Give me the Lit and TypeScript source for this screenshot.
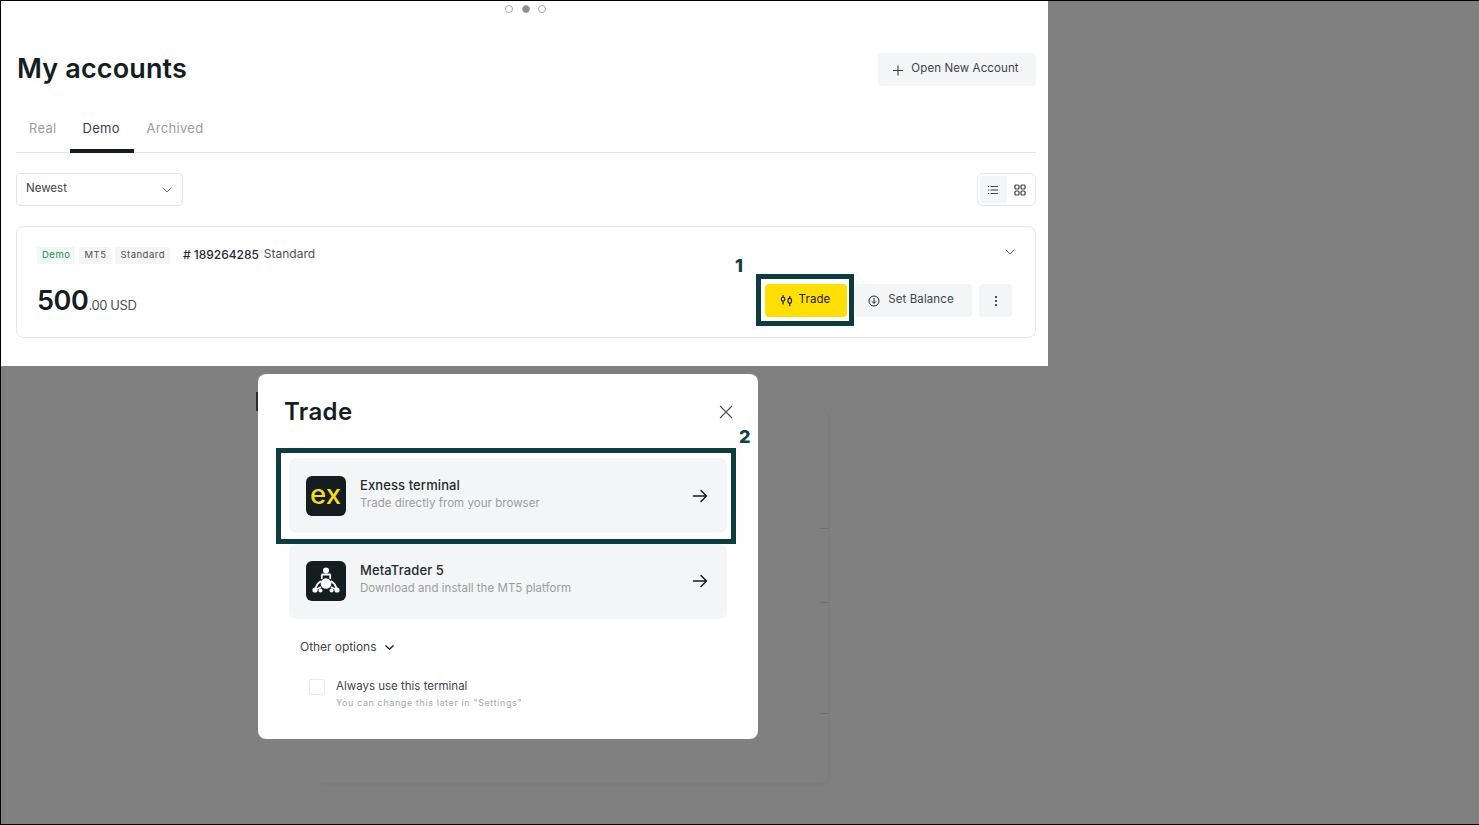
import { LitElement, html, css } from "lit";
import { customElement } from "lit/decorators.js";

const chevron = (size: number, sw = 1, color = "#5f6469") => html`<svg width=${size} height=${size} viewBox="0 0 12 12" fill="none"><path d="M2 4l4 4 4-4" stroke=${color} stroke-width=${sw} stroke-linecap="round" stroke-linejoin="round"/></svg>`;
const arrow = html`<svg width="16" height="16" viewBox="0 0 16 16" fill="none"><path d="M1.5 8h13M9 2.5L14.5 8 9 13.5" stroke="#141d22" stroke-width="1.5" stroke-linecap="round" stroke-linejoin="round"/></svg>`;

@customElement("app-root")
export class AppRoot extends LitElement {
  static styles = css`
    :host { display: block; position: relative; width: 1479px; height: 825px; box-sizing: border-box; border: 1px solid #000; border-right: 0; background: #808080; overflow: hidden; font-family: Inter, "Liberation Sans", sans-serif; color: #141d22; }
    * { box-sizing: border-box; }
    .panel { width: 1047px; height: 365px; background: #fff; padding: 0 12px 0 15px; }
    .dots { height: 16px; display: flex; justify-content: center; align-items: center; gap: 8.5px; margin-left: -1px; }
    .dot { width: 8px; height: 8px; border-radius: 50%; border: 1px solid #a4a7aa; }
    .dot.on { background: #8a8d90; }
    .head { margin-top: 36px; height: 33px; display: flex; justify-content: space-between; align-items: center; }
    h1 { margin: 0 0 2px 1px; font-size: 27px; font-weight: 600; letter-spacing: 0.15px; color: #141d22; }
    .btn { height: 33px; border-radius: 4px; background: #f3f5f7; display: flex; align-items: center; justify-content: center; font-size: 11.5px; color: #3f4549; border: 0; font-family: inherit; }
    .btn span { position: relative; top: -2px; letter-spacing: 0.1px; }
    .open { width: 158px; gap: 8px; padding-left: 2px; }
    .open svg { position: relative; left: 1px; }
    .tabs { margin-top: 20px; height: 47px; display: flex; border-bottom: 1px solid #e3e5e8; }
    .tab { padding: 0 13px; height: 47px; display: flex; align-items: center; padding-bottom: 3px; font-size: 13px; letter-spacing: 0.3px; color: #9a9da0; }
    .tab.on { color: #3b4045; border-bottom: 4px solid #141d22; padding-bottom: 0; width: 64px; }
    .bar { margin-top: 20px; height: 33px; display: flex; justify-content: space-between; }
    .select { width: 167px; border: 1px solid #e3e5e8; border-radius: 4px; display: flex; align-items: center; justify-content: space-between; padding: 0 9px; font-size: 11.5px; color: #3f4549; }
    .select span { position: relative; top: -2px; }
    .toggle { width: 59px; border: 1px solid #e3e5e8; border-radius: 6px; padding: 2px; display: flex; }
    .toggle div { width: 27px; display: flex; align-items: center; justify-content: center; border-radius: 3px; }
    .toggle div.on { background: #f3f5f7; }
    .card { margin-top: 20px; height: 112px; border: 1px solid #e3e5e8; border-radius: 8px; padding: 20px 23px 20px 20px; display: flex; flex-direction: column; gap: 20px; }
    .row { display: flex; justify-content: space-between; align-items: center; }
    .top { height: 17px; }
    .tags { display: flex; align-items: center; gap: 4px; }
    .tag { height: 17px; padding: 0 5px 2px; border-radius: 2px; background: #f3f5f7; color: #4b5055; font-size: 9.5px; letter-spacing: 0.5px; display: flex; align-items: center; }
    .tag.green { background: #eefaf3; color: #1f8a4c; }
    .num { margin-left: 9px; font-size: 12px; font-weight: 500; letter-spacing: -0.03px; color: #232a2f; position: relative; top: -1px; }
    .std { margin-left: 1px; font-size: 12px; color: #4b5055; position: relative; top: -2px; }
    .chev { margin-right: -4px; display: flex; position: relative; top: -4px; }
    .bal { height: 33px; }
    .amount { display: flex; align-items: baseline; font-size: 13px; color: #4b5055; letter-spacing: -0.4px; }
    .amount b { font-size: 27px; font-weight: 600; color: #141d22; letter-spacing: -0.4px; }
    .acts { display: flex; gap: 8px; }
    .trade { width: 82px; background: #ffde02; gap: 6px; color: #141d22; padding-right: 2px; }
    .setb { width: 117px; gap: 8px; margin-right: -1px; padding-right: 5px; }
    .more { width: 33px; }
    .ghost { position: absolute; left: 320px; top: 408px; width: 509px; height: 378px; border-right: 2px solid #7d7d7e; border-bottom: 4px solid #7d7d7e; border-radius: 0 10px 10px 0; }
    .tick { position: absolute; left: 819px; width: 9px; height: 1px; background: #707071; }
    .sliver { position: absolute; left: 255px; top: 391px; width: 2px; height: 19px; background: #2c2c2c; }
    .modal { position: absolute; left: 257px; top: 373px; width: 500px; height: 365px; background: #fff; border-radius: 8px; padding: 0 31px; }
    .mhead { height: 75px; display: flex; justify-content: space-between; align-items: center; }
    .mhead h2 { margin: 0 0 0 -5px; font-size: 24px; font-weight: 600; letter-spacing: 0.35px; color: #141d22; }
    .close { display: flex; margin-right: -6px; }
    .opt { margin-top: 9px; height: 75px; border-radius: 8px; background: #f3f5f7; display: flex; align-items: center; padding: 0 19px 0 17px; }
    .opt + .opt { margin-top: 11px; padding-bottom: 1px; }
    .ico { width: 40px; height: 40px; border-radius: 6px; background: #141d22; display: flex; align-items: center; justify-content: center; flex: none; }
    .ex { color: #f7dc1a; font-size: 26px; font-weight: 500; line-height: 40px; transform: scaleX(1.06); position: relative; top: -1px; }
    .txt { margin-left: 14px; flex: 1; display: flex; flex-direction: column; gap: 3px; position: relative; top: -1px; }
    .opt + .opt .txt { top: -2px; }
    .t1 { font-size: 13px; font-weight: 500; line-height: 15px; letter-spacing: 0.1px; color: #232a2f; }
    .t2 { font-size: 11.5px; line-height: 15px; color: #9a9da0; letter-spacing: 0.04px; }
    .other { margin: 20px 0 0 11px; height: 16px; display: flex; align-items: center; gap: 8px; font-size: 12px; letter-spacing: -0.05px; color: #3f4549; }
    .other span { position: relative; top: -1px; }
    .always { margin: 22px 0 0 20px; display: flex; gap: 11px; }
    .box { width: 16px; height: 16px; border: 1px solid #e8eaec; border-radius: 2px; margin-top: 2px; flex: none; }
    .a1 { font-size: 11.5px; line-height: 14px; color: #3f4549; margin-top: 2px; }
    .a2 { font-size: 9px; line-height: 12px; margin-top: 4px; color: #a4a7aa; letter-spacing: 0.6px; }
    .mark { position: absolute; border: 5px solid #0c3c40; pointer-events: none; }
    .m1 { left: 755px; top: 273px; width: 98px; height: 52px; }
    .m2 { left: 275px; top: 447px; width: 460px; height: 96px; }
    .num-mark { position: absolute; font-size: 18px; line-height: 20px; font-weight: 800; color: #0f4145; }
    .n1 { left: 734px; top: 255px; }
    .n2 { left: 738px; top: 426px; }
  `;

  private option(icon: unknown, title: string, sub: string) {
    return html`<div class="opt"><div class="ico">${icon}</div><div class="txt"><div class="t1">${title}</div><div class="t2">${sub}</div></div>${arrow}</div>`;
  }

  render() {
    const mt5 = html`<svg width="40" height="40" viewBox="0 0 40 40" fill="#fff"><circle cx="20" cy="9.5" r="3"/><circle cx="20" cy="22.5" r="5.3"/><circle cx="9" cy="29" r="2.6"/><circle cx="31" cy="29" r="2.6"/><circle cx="14.5" cy="29.5" r="2"/><circle cx="25.5" cy="29.5" r="2"/><path d="M15.5 13.5h9M15.8 13.5v4.5M24.2 13.5v4.5M15 20l-3.5 3-2 4M25 20l3.5 3 2 4M15 26l-4 2M25 26l4 2" stroke="#fff" stroke-width="1.8" fill="none"/></svg>`;
    return html`
      <div class="panel">
        <div class="dots"><div class="dot"></div><div class="dot on"></div><div class="dot"></div></div>
        <div class="head">
          <h1>My accounts</h1>
          <button class="btn open"><svg width="12" height="12" viewBox="0 0 12 12" fill="none"><path d="M6 1.5v10M1 6.5h10" stroke="#3b4045" stroke-width="1.1"/></svg><span>Open New Account</span></button>
        </div>
        <div class="tabs"><div class="tab">Real</div><div class="tab on">Demo</div><div class="tab">Archived</div></div>
        <div class="bar">
          <div class="select"><span>Newest</span>${chevron(12)}</div>
          <div class="toggle">
            <div class="on"><svg width="12" height="12" viewBox="0 0 12 12" fill="none" stroke="#3b4045" stroke-width="1.1"><path d="M3.5 2.5H11M3.5 6H11M3.5 9.5H11"/><path d="M1 2.5h1.2M1 6h1.2M1 9.5h1.2"/></svg></div>
            <div><svg width="12" height="12" viewBox="0 0 12 12" fill="none" stroke="#3b4045" stroke-width="1.2"><rect x="1" y="1" width="4" height="4" rx="1"/><rect x="7" y="1" width="4" height="4" rx="1"/><rect x="1" y="7" width="4" height="4" rx="1"/><rect x="7" y="7" width="4" height="4" rx="1"/></svg></div>
          </div>
        </div>
        <div class="card">
          <div class="row top">
            <div class="tags">
              <div class="tag green">Demo</div><div class="tag">MT5</div><div class="tag">Standard</div>
              <div class="num"># 189264285</div><div class="std">Standard</div>
            </div>
            <div class="chev">${chevron(12)}</div>
          </div>
          <div class="row bal">
            <div class="amount"><b>500</b><span>.00 USD</span></div>
            <div class="acts">
              <div class="btn trade"><svg width="13" height="13" viewBox="0 0 12 12" fill="none" stroke="#141d22" stroke-width="1.1"><rect x="1.2" y="3" width="3.2" height="3.6" rx="1.5"/><path d="M2.8 1v2M2.8 6.6v3"/><rect x="7.4" y="4" width="3.2" height="4.4" rx="1.5"/><path d="M9 1.8v2.2M9 8.4v2.8"/></svg><span>Trade</span></div>
              <div class="btn setb"><svg width="12" height="12" viewBox="0 0 12 12" fill="none" stroke="#232a2f" stroke-width="1"><circle cx="6" cy="6" r="5"/><path d="M6 3v5.4M3.8 6.2L6 8.4l2.2-2.2" stroke-linejoin="round"/></svg><span>Set Balance</span></div>
              <div class="btn more"><svg width="4" height="12" viewBox="0 0 4 12" fill="#232a2f"><circle cx="2" cy="2" r="1.1"/><circle cx="2" cy="6" r="1.1"/><circle cx="2" cy="10" r="1.1"/></svg></div>
            </div>
          </div>
        </div>
      </div>

      <div class="ghost"></div>
      <div class="tick" style="top:527px"></div>
      <div class="tick" style="top:601px"></div>
      <div class="tick" style="top:712px"></div>
      <div class="sliver"></div>

      <div class="modal">
        <div class="mhead">
          <h2>Trade</h2>
          <div class="close"><svg width="14" height="14" viewBox="0 0 14 14" fill="none"><path d="M1 1l12 12M13 1L1 13" stroke="#4b5055" stroke-width="1.1"/></svg></div>
        </div>
        ${this.option(html`<span class="ex">ex</span>`, "Exness terminal", "Trade directly from your browser")}
        ${this.option(mt5, "MetaTrader 5", "Download and install the MT5 platform")}
        <div class="other"><span>Other options</span>${chevron(11, 1.5, "#232a2f")}</div>
        <div class="always">
          <div class="box"></div>
          <div><div class="a1">Always use this terminal</div><div class="a2">You can change this later in "Settings"</div></div>
        </div>
      </div>

      <div class="mark m1"></div>
      <div class="mark m2"></div>
      <div class="num-mark n1">1</div>
      <div class="num-mark n2">2</div>
    `;
  }
}
